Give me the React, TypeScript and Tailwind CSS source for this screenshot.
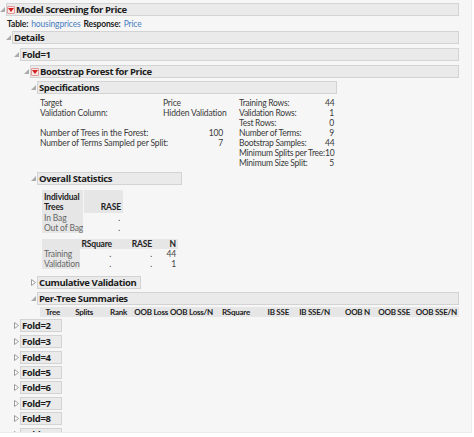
import React from 'react';

const barBase =
  "flex h-[13px] shrink-0 items-center border border-[#d3d3d3] bg-[#eaeaea] font-['Open_Sans',sans-serif] text-[9.5px] font-bold tracking-[-0.4px] text-[#1c1c1c] leading-none whitespace-nowrap";

const body = "font-['Lato',sans-serif] text-[8.5px] tracking-[-0.15px] leading-[10px] whitespace-nowrap";

function OpenTri() {
  return (
    <svg width="5" height="5" viewBox="0 0 5 5" className="shrink-0">
      <polygon points="5,0 5,5 0,5" fill="#ababab" />
    </svg>
  );
}

function ClosedTri() {
  return (
    <svg width="5" height="7" viewBox="0 0 5 7" className="shrink-0">
      <polygon points="0.5,0.5 4.5,3.5 0.5,6.5" fill="#ffffff" stroke="#9c9c9c" strokeWidth="1" />
    </svg>
  );
}

function RedMenu() {
  return (
    <span className="mr-[1px] inline-flex h-[8px] w-[8px] shrink-0 items-center justify-center rounded-[1px] border border-[#e09a9a] bg-[#fbe6e6]">
      <svg width="6" height="4" viewBox="0 0 6 4">
        <polygon points="0,0 6,0 3,4" fill="#d21f1f" />
      </svg>
    </span>
  );
}

type OutlineProps = {
  title: string;
  x: number;
  width: string;
  open?: boolean;
  menu?: boolean;
  className?: string;
};

// x = left edge of the bar; the disclosure triangle sits just before it
function Outline({ title, x, width, open = true, menu = false, className = '' }: OutlineProps) {
  return (
    <div className={`flex items-center ${className}`}>
      <div className="flex shrink-0 justify-end pr-[1px]" style={{ width: x }}>
        {open ? <OpenTri /> : <ClosedTri />}
      </div>
      <div className={`${barBase} ${width} ${menu ? 'pl-0' : 'pl-[1px]'}`}>
        {menu && <RedMenu />}
        <span>{title}</span>
      </div>
    </div>
  );
}

const specLeft = [
  ['Target', 'Price', 'left'],
  ['Validation Column:', 'Hidden Validation', 'left'],
  ['', '', 'left'],
  ['Number of Trees in the Forest:', '100', 'right'],
  ['Number of Terms Sampled per Split:', '7', 'right'],
];

const specRight = [
  ['Training Rows:', '44'],
  ['Validation Rows:', '1'],
  ['Test Rows:', '0'],
  ['Number of Terms:', '9'],
  ['Bootstrap Samples:', '44'],
  ['Minimum Splits per Tree:', '10'],
  ['Minimum Size Split:', '5'],
];

const treeCols = [
  ['Tree', 'w-[20px]'],
  ['Splits', 'w-[33px]'],
  ['Rank', 'w-[34px]'],
  ['OOB Loss', 'w-[41px]'],
  ['OOB Loss/N', 'w-[45px]'],
  ['RSquare', 'w-[37px]'],
  ['IB SSE', 'w-[39px]'],
  ['IB SSE/N', 'w-[41px]'],
  ['OOB N', 'w-[40px]'],
  ['OOB SSE', 'w-[40px]'],
  ['OOB SSE/N', 'w-[47px]'],
];

const folds = [
  ['Fold=2', 'mt-[2px]'],
  ['Fold=3', 'mt-[3px]'],
  ['Fold=4', 'mt-[3px]'],
  ['Fold=5', 'mt-[2px]'],
  ['Fold=6', 'mt-[2px]'],
  ['Fold=7', 'mt-[3px]'],
  ['Fold=8', 'mt-[2px]'],
  ['Fold=9', 'mt-[3px]'],
];

export default function App() {
  return (
    <div className="min-h-screen bg-white">
      <div className="h-[433px] w-[472px] overflow-hidden border-b border-r border-[#ececec] bg-[#f6f6f6] pt-[3px]">
        <Outline title="Model Screening for Price" x={6} width="w-[453px]" menu />

        <div className={`flex h-[14px] items-center pl-[7px] pt-[2px] ${body}`}>
          <span className="font-bold text-[#222]">Table:</span>
          <span className="ml-[3px] text-[#4a7fc1]">housingprices</span>
          <span className="ml-[3px] font-bold text-[#222]">Response:</span>
          <span className="ml-[3px] text-[#4a7fc1]">Price</span>
        </div>

        <Outline title="Details" x={12} width="w-[447px]" className="mt-[1px]" />
        <Outline title="Fold=1" x={20} width="w-[439px]" className="mt-[4px]" />
        <Outline title="Bootstrap Forest for Price" x={30} width="w-[429px]" menu className="mt-[4px]" />
        <Outline title="Specifications" x={37} width="w-[300px]" className="mt-[3px]" />

        {/* specifications body */}
        <div className={`flex pl-[40px] pt-[4px] text-[#3a3a3a] ${body}`}>
          <div className="flex flex-col">
            {specLeft.map(([label, value, align], i) => (
              <div key={i} className="flex h-[10px]">
                <span className="w-[123px]">{label}</span>
                <span className={`w-[60px] ${align === 'right' ? 'text-right' : 'text-left'}`}>{value}</span>
              </div>
            ))}
          </div>
          <div className="ml-[16px] flex flex-col tracking-[-0.25px]">
            {specRight.map(([label, value]) => (
              <div key={label} className="flex h-[10px]">
                <span className="w-[86px]">{label}</span>
                <span className="w-[9px] text-right">{value}</span>
              </div>
            ))}
          </div>
        </div>

        <Outline title="Overall Statistics" x={37} width="w-[145px]" className="mt-[4px]" />

        {/* individual trees table */}
        <div className={`mt-[5px] ml-[42px] flex flex-col ${body}`}>
          <div className="flex h-[23px]">
            <div className="flex w-[41px] flex-col justify-center bg-[#e6e6e6] pl-[2px] font-bold text-[#222]">
              <span>Individual</span>
              <span>Trees</span>
            </div>
            <div className="ml-[1px] flex w-[39px] items-end justify-end bg-[#e6e6e6] pr-[2px] pb-[1px] font-bold text-[#222]">
              RASE
            </div>
          </div>
          {['In Bag', 'Out of Bag'].map((r) => (
            <div key={r} className="flex h-[10px]">
              <span className="w-[41px] bg-[#e6e6e6] pl-[2px] text-[#666]">{r}</span>
              <span className="ml-[1px] w-[39px] pr-[3px] text-right text-[#444]">.</span>
            </div>
          ))}
        </div>

        {/* rsquare table */}
        <div className={`mt-[6px] ml-[42px] flex flex-col ${body}`}>
          <div className="flex h-[10px] w-[136px] bg-[#e6e6e6] font-bold text-[#222]">
            <span className="w-[38px]" />
            <span className="w-[34px] pr-[2px] text-right">RSquare</span>
            <span className="w-[40px] pr-[2px] text-right">RASE</span>
            <span className="w-[24px] pr-[2px] text-right">N</span>
          </div>
          {[
            ['Training', '44'],
            ['Validation', '1'],
          ].map(([r, n]) => (
            <div key={r} className="flex h-[10px] text-[#444]">
              <span className="w-[38px] bg-[#e6e6e6] pl-[2px] text-[#666]">{r}</span>
              <span className="w-[34px] pr-[3px] text-right">.</span>
              <span className="w-[40px] pr-[2px] text-right">.</span>
              <span className="w-[24px] pr-[2px] text-right">{n}</span>
            </div>
          ))}
        </div>

        <Outline title="Cumulative Validation" x={37} width="w-[104px]" open={false} className="mt-[7px]" />
        <Outline title="Per-Tree Summaries" x={37} width="w-[422px]" className="mt-[3px]" />

        <div className={`mt-[2px] ml-[40px] flex h-[10px] w-[419px] bg-[#e6e6e6] font-bold text-[#222] ${body} text-[8px] tracking-[-0.25px]`}>
          {treeCols.map(([c, w]) => (
            <span key={c} className={`${w} shrink-0 text-right`}>
              {c}
            </span>
          ))}
        </div>

        {folds.map(([f, mt]) => (
          <Outline key={f} title={f} x={20} width="w-[42px]" open={false} className={mt} />
        ))}
      </div>
    </div>
  );
}
